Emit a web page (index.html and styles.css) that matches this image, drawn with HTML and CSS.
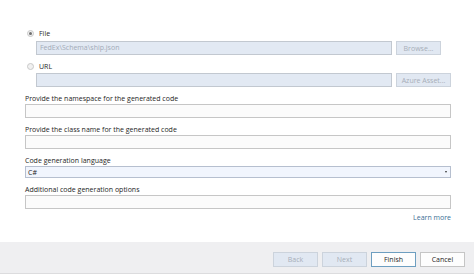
FILE: index.html
```html
<!DOCTYPE html>
<html lang="en">
<head>
  <meta charset="UTF-8" />
  <title>Add Code Generation</title>
  <link rel="stylesheet" href="styles.css">
</head>
<body>
  <div class="page">
    <div class="content">
      <div class="radio-row">
        <span class="radio checked"></span>
        <span>File</span>
      </div>
      <div class="source-row">
        <div class="input disabled muted">FedEx\Schema\ship.json</div>
        <button class="btn small" disabled>Browse...</button>
        <span class="spacer-10"></span>
      </div>

      <div class="radio-row url">
        <span class="radio"></span>
        <span>URL</span>
      </div>
      <div class="source-row">
        <div class="input disabled"></div>
        <button class="btn wide" disabled>Azure Asset...</button>
      </div>

      <div class="field">
        <label>Provide the namespace for the generated code</label>
        <div class="input"></div>
      </div>

      <div class="field">
        <label>Provide the class name for the generated code</label>
        <div class="input"></div>
      </div>

      <div class="field">
        <label>Code generation language</label>
        <div class="select">
          <span>C#</span>
          <span class="caret"></span>
        </div>
      </div>

      <div class="field">
        <label>Additional code generation options</label>
        <div class="input"></div>
      </div>

      <div class="links">
        <a href="#">Learn more</a>
      </div>
    </div>

    <div class="footer">
      <button class="btn footer-btn" disabled>Back</button>
      <button class="btn footer-btn" disabled>Next</button>
      <button class="btn footer-btn primary">Finish</button>
      <button class="btn footer-btn">Cancel</button>
    </div>
  </div>
</body>
</html>
```

FILE: styles.css
```css
body {
  margin: 0;
  padding: 0;
  background: #fff;
  font-family: "Open Sans", "Noto Sans", sans-serif;
  font-size: 7px;
  color: #1e1e1e;
}
.page {
  width: 474px;
  height: 274px;
  display: flex;
  flex-direction: column;
}
.content {
  flex: 1;
  padding: 28px 23px 0 25px;
}
.radio-row {
  display: flex;
  align-items: center;
  gap: 5px;
  height: 10px;
  padding-left: 2px;
  margin-bottom: 3px;
}
.radio-row.url { margin-top: 6px; margin-bottom: 2px; }
.radio {
  width: 5px;
  height: 5px;
  border: 1px solid #c9c9c9;
  border-radius: 50%;
  background: #f1f1f1;
  display: flex;
  align-items: center;
  justify-content: center;
}
.radio.checked::after {
  content: "";
  width: 3px;
  height: 3px;
  border-radius: 50%;
  background: #707070;
}
.source-row {
  display: flex;
  gap: 4px;
  padding-left: 11px;
}
.source-row .input { flex: 1; }
.spacer-10 { width: 6px; }
.input {
  height: 12px;
  border: 1px solid #c6c6c6;
  background: #fbfbfb;
  box-sizing: content-box;
  line-height: 12px;
  padding: 0 3px;
}
.input.disabled {
  background: #e2e9f3;
  border-color: #c2c8d0;
}
.muted { color: #a2abb8; }
.btn {
  font-family: inherit;
  font-size: 7px;
  height: 14px;
  padding: 0;
  border: 1px solid #c5c5c5;
  background: #fdfdfd;
  color: #1e1e1e;
}
.btn:disabled {
  background: #e1e8f2;
  border-color: #ccd3dc;
  color: #a7aeb8;
}
.btn.small { width: 45px; }
.btn.wide { width: 55px; }
.field { margin-top: 6px; }
.field label {
  display: block;
  height: 11px;
  line-height: 11px;
}
.select {
  height: 10px;
  border: 1px solid #b6bfcf;
  background: #f1f5fd;
  display: flex;
  align-items: center;
  justify-content: space-between;
  padding: 0 3px 0 2px;
}
.caret {
  width: 0;
  height: 0;
  border-left: 1.5px solid transparent;
  border-right: 1.5px solid transparent;
  border-top: 2px solid #333;
}
.links {
  text-align: right;
  margin-top: 4px;
}
.links a {
  color: #3b6f96;
  text-decoration: none;
}
.footer {
  height: 32px;
  background: #efeff1;
  border-bottom: 1px solid #dcdcde;
  box-sizing: border-box;
  display: flex;
  justify-content: flex-end;
  align-items: flex-start;
  gap: 4px;
  padding: 10px 9px 0 0;
}
.footer-btn { width: 45px; height: 15px; }
.footer-btn.primary { border-color: #6d9ec0; }
```
